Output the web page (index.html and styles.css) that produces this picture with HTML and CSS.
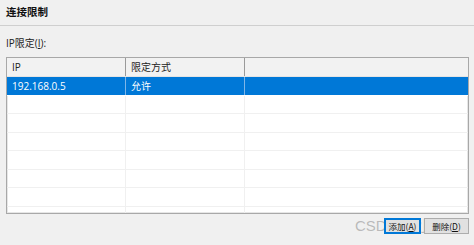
FILE: index.html
```html
<!DOCTYPE html>
<html lang="zh">
<head>
<meta charset="utf-8">
<title>连接限制</title>
<link rel="stylesheet" href="styles.css">
</head>
<body>
<div class="dialog">
  <div class="title">连接限制</div>
  <div class="content">
    <div class="label">IP限定(<u>I</u>):</div>
    <div class="list">
      <div class="row head">
        <div class="cell c1">IP</div>
        <div class="cell c2">限定方式</div>
        <div class="cell c3"></div>
      </div>
      <div class="row sel">
        <div class="cell c1">192.168.0.5</div>
        <div class="cell c2">允许</div>
        <div class="cell c3"></div>
      </div>
      <div class="row"><div class="cell c1"></div><div class="cell c2"></div><div class="cell c3"></div></div>
      <div class="row"><div class="cell c1"></div><div class="cell c2"></div><div class="cell c3"></div></div>
      <div class="row"><div class="cell c1"></div><div class="cell c2"></div><div class="cell c3"></div></div>
      <div class="row"><div class="cell c1"></div><div class="cell c2"></div><div class="cell c3"></div></div>
      <div class="row"><div class="cell c1"></div><div class="cell c2"></div><div class="cell c3"></div></div>
      <div class="row"><div class="cell c1"></div><div class="cell c2"></div><div class="cell c3"></div></div>
      <div class="row"><div class="cell c1"></div><div class="cell c2"></div><div class="cell c3"></div></div>
    </div>
    <div class="buttons">
      <span class="watermark">CSDN @小秀才</span>
      <button class="btn focus">添加(<u>A</u>)</button>
      <button class="btn del">删除(<u>D</u>)</button>
    </div>
  </div>
</div>
</body>
</html>
```
FILE: styles.css
```css
* { box-sizing: border-box; }
html, body { margin: 0; padding: 0; }
body {
  width: 474px;
  height: 245px;
  background: #f0f0f0;
  font-family: "Open Sans", "Noto Sans CJK SC", sans-serif;
  color: #1a1a1a;
  overflow: hidden;
}
.dialog { display: flex; flex-direction: column; height: 245px; }
.title {
  height: 26px;
  padding-left: 6px;
  line-height: 24px;
  font-size: 10.5px;
  font-weight: bold;
  font-family: "Noto Sans CJK SC", sans-serif;
  border-bottom: 1px solid #cfcfcf;
  color: #111;
}
.content { display: flex; flex-direction: column; }
.label {
  padding: 10px 0 0 6px;
  height: 31px;
  line-height: 15px;
  font-size: 10px;
  font-family: "Open Sans", "Noto Sans CJK SC", sans-serif;
  color: #222;
}
.label u { text-decoration: underline; }
.list {
  margin: 0 5px 0 6px;
  height: 157px;
  border: 1px solid #a8a8a8;
  background: #fff;
  overflow: hidden;
  box-shadow: inset 0 0 0 1px #e6e6e6;
}
.row {
  display: flex;
  height: 18.5px;
  border-bottom: 1px solid #f0f0f0;
  font-size: 10px;
}
.cell { height: 100%; padding-left: 5px; line-height: 17px; white-space: nowrap; }
.c1 { width: 119px; border-right: 1px solid #f0f0f0; }
.c2 { width: 119px; border-right: 1px solid #f0f0f0; }
.c3 { flex: 1; }
.row.head {
  height: 19px;
  background: #f2f2f2;
  border-bottom: 1px solid #e4e4e4;
  color: #222;
}
.row.head .c1, .row.head .c2 { border-right: 1px solid #9a9a9a; }
.row.head .cell { line-height: 18px; }
.row.sel {
  background: #0078d7;
  color: #fff;
  border-bottom: 1px solid #ffffff;
}
.row.sel .c1, .row.sel .c2 { border-right: 1px solid #7fb6e8; }
.row.sel .cell { line-height: 18px; }
.buttons {
  position: relative;
  display: flex;
  justify-content: flex-end;
  gap: 3px;
  margin-top: 4px;
  padding-right: 5px;
  height: 16px;
}
.btn {
  position: relative;
  height: 16px;
  width: 37px;
  padding: 0;
  font-size: 8.5px;
  line-height: 12px;
  text-align: center;
  white-space: nowrap;
  font-family: "Noto Sans CJK SC", sans-serif;
  background: #e1e1e1;
  border: 1px solid #adadad;
  color: #111;
}
.btn.del { width: 45px; }
.btn.focus { border: 2px solid #0078d7; }
.btn u { text-decoration: underline; }
.watermark {
  position: absolute;
  left: 355px;
  top: -1px;
  font-size: 15px;
  line-height: 17px;
  color: rgba(140, 140, 140, 0.55);
  font-family: "Liberation Sans", "Noto Sans CJK SC", sans-serif;
  pointer-events: none;
  white-space: nowrap;
}
```
